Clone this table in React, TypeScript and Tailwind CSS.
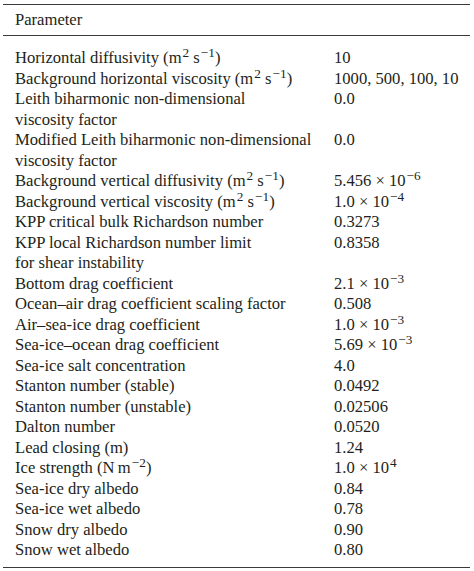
import React from 'react';

type Row = { name: React.ReactNode[]; value: React.ReactNode };

const Sup = ({ children }: { children: React.ReactNode }) => (
  <sup className="relative -top-[0.45em] ml-[1px] align-baseline text-[0.8em] leading-none">{children}</sup>
);

const unit = (
  <>
    (m<Sup>2</Sup> s<Sup>−1</Sup>)
  </>
);

const sci = (m: string, e: string) => (
  <>
    {m} × 10<Sup>{e}</Sup>
  </>
);

const rows: Row[] = [
  { name: [<>Horizontal diffusivity {unit}</>], value: '10' },
  { name: [<>Background horizontal viscosity {unit}</>], value: '1000, 500, 100, 10' },
  { name: ['Leith biharmonic non-dimensional', 'viscosity factor'], value: '0.0' },
  { name: ['Modified Leith biharmonic non-dimensional', 'viscosity factor'], value: '0.0' },
  { name: [<>Background vertical diffusivity {unit}</>], value: sci('5.456', '−6') },
  { name: [<>Background vertical viscosity {unit}</>], value: sci('1.0', '−4') },
  { name: ['KPP critical bulk Richardson number'], value: '0.3273' },
  { name: ['KPP local Richardson number limit', 'for shear instability'], value: '0.8358' },
  { name: ['Bottom drag coefficient'], value: sci('2.1', '−3') },
  { name: ['Ocean–air drag coefficient scaling factor'], value: '0.508' },
  { name: ['Air–sea-ice drag coefficient'], value: sci('1.0', '−3') },
  { name: ['Sea-ice–ocean drag coefficient'], value: sci('5.69', '−3') },
  { name: ['Sea-ice salt concentration'], value: '4.0' },
  { name: ['Stanton number (stable)'], value: '0.0492' },
  { name: ['Stanton number (unstable)'], value: '0.02506' },
  { name: ['Dalton number'], value: '0.0520' },
  { name: ['Lead closing (m)'], value: '1.24' },
  {
    name: [
      <>
        Ice strength (N&thinsp;m<Sup>−2</Sup>)
      </>,
    ],
    value: sci('1.0', '4'),
  },
  { name: ['Sea-ice dry albedo'], value: '0.84' },
  { name: ['Sea-ice wet albedo'], value: '0.78' },
  { name: ['Snow dry albedo'], value: '0.90' },
  { name: ['Snow wet albedo'], value: '0.80' },
];

export default function App() {
  return (
    <div className="min-h-[571px] bg-white pt-[4px] [font-family:Liberation_Serif,serif] text-[16.6px] text-[#231f20]">
      <div className="ml-[3px] w-[467px] border-y border-[#3a3a3a]">
        <div className="border-b border-[#3a3a3a] px-3 py-[5px] leading-[20px]">Parameter</div>
        <div className="grid grid-cols-[331px_1fr] pb-[6px] pt-[12px] leading-[20.5px]">
          {rows.map((row, i) => (
            <React.Fragment key={i}>
              <div className="pl-3">
                {row.name.map((line, j) => (
                  <div key={j}>{line}</div>
                ))}
              </div>
              <div>{row.value}</div>
            </React.Fragment>
          ))}
        </div>
      </div>
    </div>
  );
}
